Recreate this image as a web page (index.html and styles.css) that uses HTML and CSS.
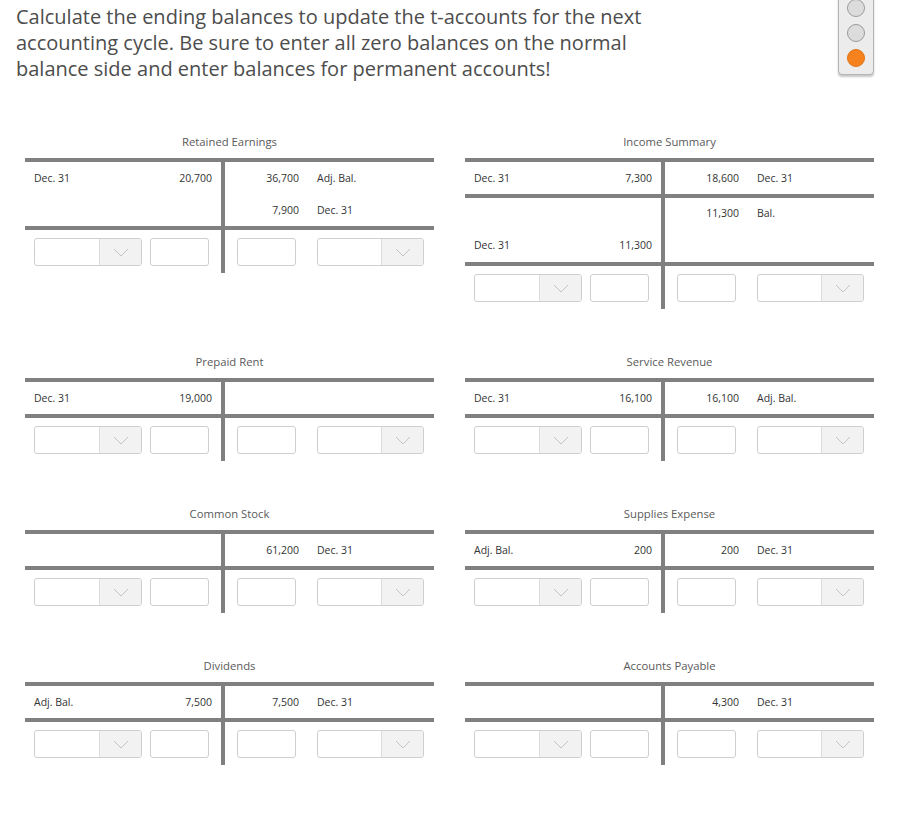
FILE: index.html
```html
<!DOCTYPE html>
<html>
<head>
<meta charset="utf-8">
<link rel="stylesheet" href="styles.css">
</head>
<body>
<div class="page">
  <div class="signal">
    <span class="dot"></span>
    <span class="dot"></span>
    <span class="dot on"></span>
  </div>
  <p class="prompt">Calculate the ending balances to update the t-accounts for the next accounting cycle. Be sure to enter all zero balances on the normal balance side and enter balances for permanent accounts!</p>

  <div class="accounts">
    <!-- Retained Earnings -->
    <div class="acct">
      <div class="acct-title">Retained Earnings</div>
      <div class="tbody">
        <div class="rule"></div>
        <div class="row"><span class="c1">Dec. 31</span><span class="c2">20,700</span><span class="c3">36,700</span><span class="c4">Adj. Bal.</span></div>
        <div class="row"><span class="c1"></span><span class="c2"></span><span class="c3">7,900</span><span class="c4">Dec. 31</span></div>
        <div class="rule"></div>
        <div class="inrow">
          <div class="sel sel-l"><span class="arrow"><svg width="16" height="9" viewBox="0 0 16 9"><path d="M1 1 L8 8 L15 1" fill="none" stroke="#c4c4c4" stroke-width="1"/></svg></span></div>
          <input class="box box-l" type="text">
          <input class="box box-r" type="text">
          <div class="sel sel-r"><span class="arrow"><svg width="16" height="9" viewBox="0 0 16 9"><path d="M1 1 L8 8 L15 1" fill="none" stroke="#c4c4c4" stroke-width="1"/></svg></span></div>
        </div>
      </div>
    </div>

    <!-- Income Summary -->
    <div class="acct">
      <div class="acct-title">Income Summary</div>
      <div class="tbody">
        <div class="rule"></div>
        <div class="row"><span class="c1">Dec. 31</span><span class="c2">7,300</span><span class="c3">18,600</span><span class="c4">Dec. 31</span></div>
        <div class="rule"></div>
        <div class="row row-short"><span class="c1"></span><span class="c2"></span><span class="c3">11,300</span><span class="c4">Bal.</span></div>
        <div class="row row-tall"><span class="c1">Dec. 31</span><span class="c2">11,300</span><span class="c3"></span><span class="c4"></span></div>
        <div class="rule"></div>
        <div class="inrow">
          <div class="sel sel-l"><span class="arrow"><svg width="16" height="9" viewBox="0 0 16 9"><path d="M1 1 L8 8 L15 1" fill="none" stroke="#c4c4c4" stroke-width="1"/></svg></span></div>
          <input class="box box-l" type="text">
          <input class="box box-r" type="text">
          <div class="sel sel-r"><span class="arrow"><svg width="16" height="9" viewBox="0 0 16 9"><path d="M1 1 L8 8 L15 1" fill="none" stroke="#c4c4c4" stroke-width="1"/></svg></span></div>
        </div>
      </div>
    </div>

    <!-- Prepaid Rent -->
    <div class="acct">
      <div class="acct-title">Prepaid Rent</div>
      <div class="tbody">
        <div class="rule"></div>
        <div class="row"><span class="c1">Dec. 31</span><span class="c2">19,000</span><span class="c3"></span><span class="c4"></span></div>
        <div class="rule"></div>
        <div class="inrow">
          <div class="sel sel-l"><span class="arrow"><svg width="16" height="9" viewBox="0 0 16 9"><path d="M1 1 L8 8 L15 1" fill="none" stroke="#c4c4c4" stroke-width="1"/></svg></span></div>
          <input class="box box-l" type="text">
          <input class="box box-r" type="text">
          <div class="sel sel-r"><span class="arrow"><svg width="16" height="9" viewBox="0 0 16 9"><path d="M1 1 L8 8 L15 1" fill="none" stroke="#c4c4c4" stroke-width="1"/></svg></span></div>
        </div>
      </div>
    </div>

    <!-- Service Revenue -->
    <div class="acct">
      <div class="acct-title">Service Revenue</div>
      <div class="tbody">
        <div class="rule"></div>
        <div class="row"><span class="c1">Dec. 31</span><span class="c2">16,100</span><span class="c3">16,100</span><span class="c4">Adj. Bal.</span></div>
        <div class="rule"></div>
        <div class="inrow">
          <div class="sel sel-l"><span class="arrow"><svg width="16" height="9" viewBox="0 0 16 9"><path d="M1 1 L8 8 L15 1" fill="none" stroke="#c4c4c4" stroke-width="1"/></svg></span></div>
          <input class="box box-l" type="text">
          <input class="box box-r" type="text">
          <div class="sel sel-r"><span class="arrow"><svg width="16" height="9" viewBox="0 0 16 9"><path d="M1 1 L8 8 L15 1" fill="none" stroke="#c4c4c4" stroke-width="1"/></svg></span></div>
        </div>
      </div>
    </div>

    <!-- Common Stock -->
    <div class="acct">
      <div class="acct-title">Common Stock</div>
      <div class="tbody">
        <div class="rule"></div>
        <div class="row"><span class="c1"></span><span class="c2"></span><span class="c3">61,200</span><span class="c4">Dec. 31</span></div>
        <div class="rule"></div>
        <div class="inrow">
          <div class="sel sel-l"><span class="arrow"><svg width="16" height="9" viewBox="0 0 16 9"><path d="M1 1 L8 8 L15 1" fill="none" stroke="#c4c4c4" stroke-width="1"/></svg></span></div>
          <input class="box box-l" type="text">
          <input class="box box-r" type="text">
          <div class="sel sel-r"><span class="arrow"><svg width="16" height="9" viewBox="0 0 16 9"><path d="M1 1 L8 8 L15 1" fill="none" stroke="#c4c4c4" stroke-width="1"/></svg></span></div>
        </div>
      </div>
    </div>

    <!-- Supplies Expense -->
    <div class="acct">
      <div class="acct-title">Supplies Expense</div>
      <div class="tbody">
        <div class="rule"></div>
        <div class="row"><span class="c1">Adj. Bal.</span><span class="c2">200</span><span class="c3">200</span><span class="c4">Dec. 31</span></div>
        <div class="rule"></div>
        <div class="inrow">
          <div class="sel sel-l"><span class="arrow"><svg width="16" height="9" viewBox="0 0 16 9"><path d="M1 1 L8 8 L15 1" fill="none" stroke="#c4c4c4" stroke-width="1"/></svg></span></div>
          <input class="box box-l" type="text">
          <input class="box box-r" type="text">
          <div class="sel sel-r"><span class="arrow"><svg width="16" height="9" viewBox="0 0 16 9"><path d="M1 1 L8 8 L15 1" fill="none" stroke="#c4c4c4" stroke-width="1"/></svg></span></div>
        </div>
      </div>
    </div>

    <!-- Dividends -->
    <div class="acct">
      <div class="acct-title">Dividends</div>
      <div class="tbody">
        <div class="rule"></div>
        <div class="row"><span class="c1">Adj. Bal.</span><span class="c2">7,500</span><span class="c3">7,500</span><span class="c4">Dec. 31</span></div>
        <div class="rule"></div>
        <div class="inrow">
          <div class="sel sel-l"><span class="arrow"><svg width="16" height="9" viewBox="0 0 16 9"><path d="M1 1 L8 8 L15 1" fill="none" stroke="#c4c4c4" stroke-width="1"/></svg></span></div>
          <input class="box box-l" type="text">
          <input class="box box-r" type="text">
          <div class="sel sel-r"><span class="arrow"><svg width="16" height="9" viewBox="0 0 16 9"><path d="M1 1 L8 8 L15 1" fill="none" stroke="#c4c4c4" stroke-width="1"/></svg></span></div>
        </div>
      </div>
    </div>

    <!-- Accounts Payable -->
    <div class="acct">
      <div class="acct-title">Accounts Payable</div>
      <div class="tbody">
        <div class="rule"></div>
        <div class="row"><span class="c1"></span><span class="c2"></span><span class="c3">4,300</span><span class="c4">Dec. 31</span></div>
        <div class="rule"></div>
        <div class="inrow">
          <div class="sel sel-l"><span class="arrow"><svg width="16" height="9" viewBox="0 0 16 9"><path d="M1 1 L8 8 L15 1" fill="none" stroke="#c4c4c4" stroke-width="1"/></svg></span></div>
          <input class="box box-l" type="text">
          <input class="box box-r" type="text">
          <div class="sel sel-r"><span class="arrow"><svg width="16" height="9" viewBox="0 0 16 9"><path d="M1 1 L8 8 L15 1" fill="none" stroke="#c4c4c4" stroke-width="1"/></svg></span></div>
        </div>
      </div>
    </div>
  </div>
</div>
</body>
</html>
```

FILE: styles.css
```css
* { box-sizing: border-box; }
html, body { margin: 0; padding: 0; background: #fff; }
body { font-family: "Open Sans", "DejaVu Sans", sans-serif; }

.page {
  position: relative;
  width: 907px;
  min-height: 826px;
  padding: 4px 0 0 16px;
}

.prompt {
  margin: 0;
  width: 660px;
  font-size: 20px;
  line-height: 26px;
  color: #4d4d4d;
}

.signal {
  position: absolute;
  left: 838px;
  top: -6px;
  width: 36px;
  height: 81px;
  padding-top: 4px;
  display: flex;
  flex-direction: column;
  align-items: center;
  gap: 7px;
  background: #ececec;
  border: 1px solid #b5b5b5;
  border-radius: 4px;
  box-shadow: 0 2px 2px rgba(0,0,0,0.22);
}
.dot {
  width: 18px;
  height: 18px;
  border-radius: 50%;
  background: #dcdcdc;
  border: 1px solid #9a9a9a;
}
.dot.on {
  background: #f5821f;
  border-color: #e07413;
}

.accounts {
  display: grid;
  grid-template-columns: 409px 409px;
  column-gap: 31px;
  row-gap: 43px;
  margin: 50px 0 0 9px;
}

.acct-title {
  text-align: center;
  font-size: 11.3px;
  line-height: 20px;
  color: #5a5a5a;
  margin-bottom: 6px;
}

.tbody {
  background-image: linear-gradient(#808080, #808080);
  background-repeat: no-repeat;
  background-size: 4px 100%;
  background-position: 196px 0;
  padding-bottom: 7px;
  font-size: 10.5px;
  color: #333;
}

.rule {
  height: 4px;
  background: #808080;
}

.row {
  display: flex;
  align-items: center;
  height: 32px;
}
.row-short { height: 30px; }
.row-tall { height: 34px; }
.c1 { width: 121px; padding-left: 9px; }
.c2 { width: 75px; text-align: right; padding-right: 9px; }
.c3 { width: 80px; margin-left: 4px; text-align: right; padding-right: 6px; }
.c4 { width: 129px; padding-left: 12px; }

.inrow {
  display: flex;
  align-items: center;
  height: 28px;
  margin-top: 8px;
}

.sel {
  height: 28px;
  border: 1px solid #cfcfcf;
  border-radius: 3px;
  background: #fff;
  display: flex;
  justify-content: flex-end;
  overflow: hidden;
}
.sel-l { width: 108px; margin-left: 9px; }
.sel-r { width: 107px; margin-left: 21px; }
.arrow {
  width: 42px;
  height: 100%;
  background: #f2f2f2;
  border-left: 1px solid #dcdcdc;
  display: flex;
  align-items: center;
  justify-content: center;
}
.arrow svg { display: block; margin-top: 1px; }

.box {
  height: 28px;
  width: 59px;
  border: 1px solid #cfcfcf;
  border-radius: 3px;
  background: #fff;
  padding: 0;
  margin: 0;
  font: inherit;
}
.box-l { margin-left: 8px; }
.box-r { margin-left: 28px; }
```
